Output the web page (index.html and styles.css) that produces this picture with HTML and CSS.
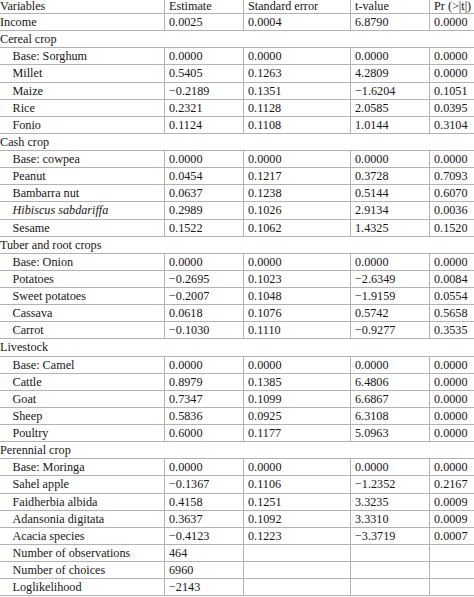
FILE: index.html
```html
<!DOCTYPE html>
<html>
<head>
<meta charset="utf-8">
<link rel="stylesheet" href="styles.css">
</head>
<body>
<div class="tbl">
  <div class="row head"><div class="c v">Variables</div><div class="c">Estimate</div><div class="c">Standard error</div><div class="c">t-value</div><div class="c">Pr (&gt;|t|)</div></div>
  <div class="row"><div class="c v">Income</div><div class="c">0.0025</div><div class="c">0.0004</div><div class="c">6.8790</div><div class="c">0.0000</div></div>

  <div class="row group"><div class="c v">Cereal crop</div></div>
  <div class="row sub"><div class="c v">Base: Sorghum</div><div class="c">0.0000</div><div class="c">0.0000</div><div class="c">0.0000</div><div class="c">0.0000</div></div>
  <div class="row sub"><div class="c v">Millet</div><div class="c">0.5405</div><div class="c">0.1263</div><div class="c">4.2809</div><div class="c">0.0000</div></div>
  <div class="row sub"><div class="c v">Maize</div><div class="c">&minus;0.2189</div><div class="c">0.1351</div><div class="c">&minus;1.6204</div><div class="c">0.1051</div></div>
  <div class="row sub"><div class="c v">Rice</div><div class="c">0.2321</div><div class="c">0.1128</div><div class="c">2.0585</div><div class="c">0.0395</div></div>
  <div class="row sub"><div class="c v">Fonio</div><div class="c">0.1124</div><div class="c">0.1108</div><div class="c">1.0144</div><div class="c">0.3104</div></div>

  <div class="row group"><div class="c v">Cash crop</div></div>
  <div class="row sub"><div class="c v">Base: cowpea</div><div class="c">0.0000</div><div class="c">0.0000</div><div class="c">0.0000</div><div class="c">0.0000</div></div>
  <div class="row sub"><div class="c v">Peanut</div><div class="c">0.0454</div><div class="c">0.1217</div><div class="c">0.3728</div><div class="c">0.7093</div></div>
  <div class="row sub"><div class="c v">Bambarra nut</div><div class="c">0.0637</div><div class="c">0.1238</div><div class="c">0.5144</div><div class="c">0.6070</div></div>
  <div class="row sub"><div class="c v"><span class="it">Hibiscus sabdariffa</span></div><div class="c">0.2989</div><div class="c">0.1026</div><div class="c">2.9134</div><div class="c">0.0036</div></div>
  <div class="row sub"><div class="c v">Sesame</div><div class="c">0.1522</div><div class="c">0.1062</div><div class="c">1.4325</div><div class="c">0.1520</div></div>

  <div class="row group"><div class="c v">Tuber and root crops</div></div>
  <div class="row sub"><div class="c v">Base: Onion</div><div class="c">0.0000</div><div class="c">0.0000</div><div class="c">0.0000</div><div class="c">0.0000</div></div>
  <div class="row sub"><div class="c v">Potatoes</div><div class="c">&minus;0.2695</div><div class="c">0.1023</div><div class="c">&minus;2.6349</div><div class="c">0.0084</div></div>
  <div class="row sub"><div class="c v">Sweet potatoes</div><div class="c">&minus;0.2007</div><div class="c">0.1048</div><div class="c">&minus;1.9159</div><div class="c">0.0554</div></div>
  <div class="row sub"><div class="c v">Cassava</div><div class="c">0.0618</div><div class="c">0.1076</div><div class="c">0.5742</div><div class="c">0.5658</div></div>
  <div class="row sub"><div class="c v">Carrot</div><div class="c">&minus;0.1030</div><div class="c">0.1110</div><div class="c">&minus;0.9277</div><div class="c">0.3535</div></div>

  <div class="row group"><div class="c v">Livestock</div></div>
  <div class="row sub"><div class="c v">Base: Camel</div><div class="c">0.0000</div><div class="c">0.0000</div><div class="c">0.0000</div><div class="c">0.0000</div></div>
  <div class="row sub"><div class="c v">Cattle</div><div class="c">0.8979</div><div class="c">0.1385</div><div class="c">6.4806</div><div class="c">0.0000</div></div>
  <div class="row sub"><div class="c v">Goat</div><div class="c">0.7347</div><div class="c">0.1099</div><div class="c">6.6867</div><div class="c">0.0000</div></div>
  <div class="row sub"><div class="c v">Sheep</div><div class="c">0.5836</div><div class="c">0.0925</div><div class="c">6.3108</div><div class="c">0.0000</div></div>
  <div class="row sub"><div class="c v">Poultry</div><div class="c">0.6000</div><div class="c">0.1177</div><div class="c">5.0963</div><div class="c">0.0000</div></div>

  <div class="row group"><div class="c v">Perennial crop</div></div>
  <div class="row sub"><div class="c v">Base: Moringa</div><div class="c">0.0000</div><div class="c">0.0000</div><div class="c">0.0000</div><div class="c">0.0000</div></div>
  <div class="row sub"><div class="c v">Sahel apple</div><div class="c">&minus;0.1367</div><div class="c">0.1106</div><div class="c">&minus;1.2352</div><div class="c">0.2167</div></div>
  <div class="row sub"><div class="c v">Faidherbia albida</div><div class="c">0.4158</div><div class="c">0.1251</div><div class="c">3.3235</div><div class="c">0.0009</div></div>
  <div class="row sub"><div class="c v">Adansonia digitata</div><div class="c">0.3637</div><div class="c">0.1092</div><div class="c">3.3310</div><div class="c">0.0009</div></div>
  <div class="row sub"><div class="c v">Acacia species</div><div class="c">&minus;0.4123</div><div class="c">0.1223</div><div class="c">&minus;3.3719</div><div class="c">0.0007</div></div>

  <div class="row sub"><div class="c v">Number of observations</div><div class="c">464</div><div class="c"></div><div class="c"></div><div class="c"></div></div>
  <div class="row sub"><div class="c v">Number of choices</div><div class="c">6960</div><div class="c"></div><div class="c"></div><div class="c"></div></div>
  <div class="row sub"><div class="c v">Loglikelihood</div><div class="c">&minus;2143</div><div class="c"></div><div class="c"></div><div class="c"></div></div>
</div>
</body>
</html>
```
FILE: styles.css
```css
html, body {
  margin: 0;
  padding: 0;
  background: #ffffff;
}
body {
  font-family: "Liberation Serif", "Times New Roman", serif;
  font-size: 12.2px;
  color: #161616;
  overflow: hidden;
}
.tbl {
  width: 474px;
}
.row {
  display: grid;
  grid-template-columns: 164px 79px 107px 79px 1fr;
  height: 17.14px;
  box-sizing: border-box;
  border-bottom: 1px solid #b3b3b3;
}
.c {
  padding-left: 4px;
  padding-top: 1px;
  line-height: 15px;
  white-space: nowrap;
  overflow: hidden;
}
.c + .c {
  border-left: 1px solid #b3b3b3;
}
.c.v {
  padding-left: 0;
}
.head {
  height: 14px;
}
.head .c {
  padding-top: 0;
  line-height: 12px;
  overflow: visible;
}
.sub .c.v {
  padding-left: 12.5px;
}
.group .c {
  grid-column: 1 / -1;
}
.it {
  font-style: italic;
}
```
